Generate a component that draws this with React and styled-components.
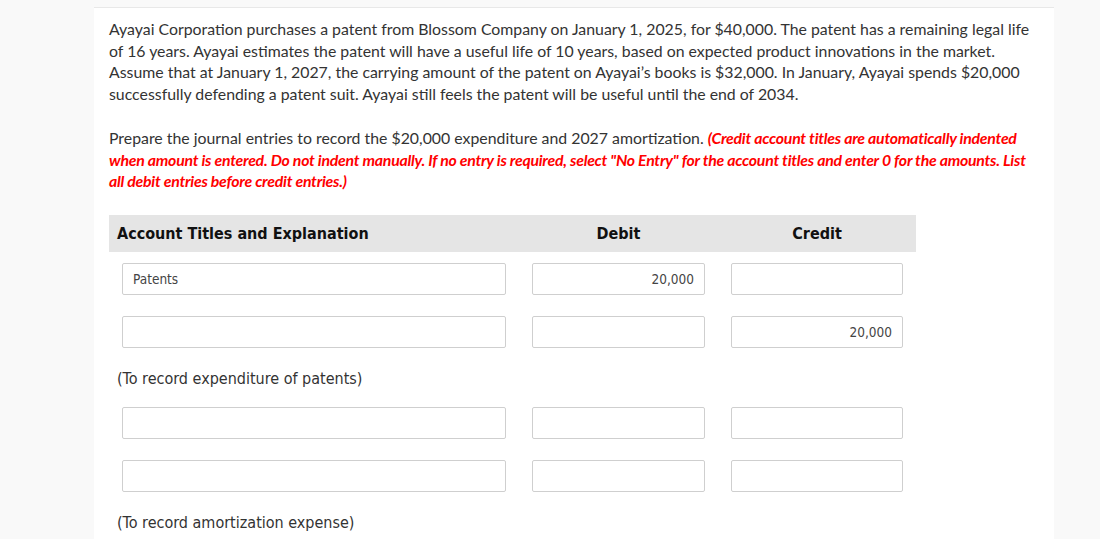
import React from "react";
import styled, { createGlobalStyle } from "styled-components";

const GlobalStyle = createGlobalStyle`
  html, body {
    margin: 0;
    padding: 0;
    background: #f9f9f9;
  }
`;

const rows = [
  { account: "Patents", debit: "20,000", credit: "" },
  { account: "", debit: "", credit: "20,000" },
  { note: "(To record expenditure of patents)" },
  { account: "", debit: "", credit: "" },
  { account: "", debit: "", credit: "" },
  { note: "(To record amortization expense)" },
];

const App = () => {
  return (
    <>
      <GlobalStyle />
      <Page>
        <Panel>
          <Question>
            Ayayai Corporation purchases a patent from Blossom Company on January 1, 2025, for $40,000. The patent has a
            remaining legal life of 16 years. Ayayai estimates the patent will have a useful life of 10 years, based on
            expected product innovations in the market. Assume that at January 1, 2027, the carrying amount of the patent
            on Ayayai’s books is $32,000. In January, Ayayai spends $20,000 successfully defending a patent suit. Ayayai
            still feels the patent will be useful until the end of 2034.
          </Question>
          <Question>
            Prepare the journal entries to record the $20,000 expenditure and 2027 amortization.{" "}
            <Warning>
              (Credit account titles are automatically indented when amount is entered. Do not indent manually. If no
              entry is required, select "No Entry" for the account titles and enter 0 for the amounts. List all debit
              entries before credit entries.)
            </Warning>
          </Question>
          <Journal>
            <HeaderCell>Account Titles and Explanation</HeaderCell>
            <HeaderCell $center>Debit</HeaderCell>
            <HeaderCell $center>Credit</HeaderCell>
            {rows.map((r, i) =>
              r.note ? (
                <Note key={i}>{r.note}</Note>
              ) : (
                <React.Fragment key={i}>
                  <Cell>
                    <Field $left>{r.account}</Field>
                  </Cell>
                  <Cell>
                    <Field>{r.debit}</Field>
                  </Cell>
                  <Cell>
                    <Field>{r.credit}</Field>
                  </Cell>
                </React.Fragment>
              )
            )}
          </Journal>
        </Panel>
      </Page>
    </>
  );
};

export default App;

const Page = styled.div`
  display: flex;
  padding: 7px 0 0 94px;
  min-height: 532px;
`;

const Panel = styled.div`
  width: 960px;
  background: #fff;
  border-top: 1px solid #e8e8e8;
  padding: 10px 15px 0 15px;
  box-sizing: border-box;
`;

const Question = styled.p`
  margin: 0 0 22px 0;
  font-family: Lato, "Open Sans", sans-serif;
  font-size: 15.85px;
  line-height: 21.7px;
  color: #333;
  width: 930px;
`;

const Warning = styled.span`
  color: #f00;
  font-weight: bold;
  font-style: italic;
  letter-spacing: -0.25px;
`;

const Journal = styled.div`
  display: grid;
  grid-template-columns: 410px 199px 198px;
  margin-top: 23px;
  font-family: "DejaVu Sans Condensed", "DejaVu Sans", sans-serif;
  color: #333;
`;

const HeaderCell = styled.div`
  background: #e5e5e5;
  height: 37px;
  display: flex;
  align-items: center;
  justify-content: ${(p) => (p.$center ? "center" : "flex-start")};
  padding-left: ${(p) => (p.$center ? "0" : "8px")};
  font-weight: bold;
  font-size: 16px;
  color: #111;
  margin-bottom: 11px;
`;

const Cell = styled.div`
  padding: 0 13px;
  margin-bottom: 21px;
`;

const Field = styled.div`
  height: 32px;
  box-sizing: border-box;
  border: 1px solid #cfcfcf;
  border-radius: 2px;
  background: #fff;
  display: flex;
  align-items: center;
  justify-content: ${(p) => (p.$left ? "flex-start" : "flex-end")};
  padding: 0 10px;
  font-size: 13.5px;
  color: #444;
`;

const Note = styled.div`
  grid-column: 1 / -1;
  padding: 0 8px;
  font-size: 16px;
  color: #333;
  margin: 0 0 18px 0;
  height: 20px;
  line-height: 20px;
`;
